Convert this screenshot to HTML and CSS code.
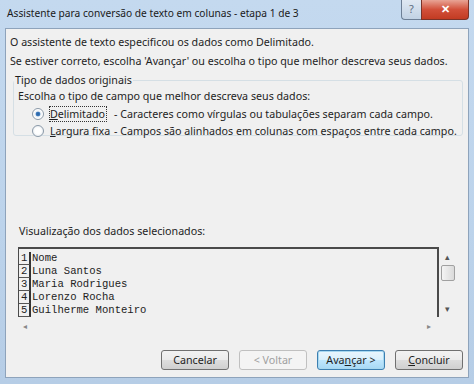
FILE: index.html
```html
<!DOCTYPE html>
<html lang="pt">
<head>
    <meta charset="UTF-8">
    <title>Assistente para conversão de texto em colunas</title>
    <link rel="stylesheet" href="styles.css">
</head>
<body>
    <div class="window">
        <div class="titlebar">
            <span class="title">Assistente para conversão de texto em colunas - etapa 1 de 3</span>
            <div class="caption-buttons">
                <span class="cap-help">?</span>
                <span class="cap-close">✕</span>
            </div>
        </div>
        <div class="client">
            <p class="line">O assistente de texto especificou os dados como Delimitado.</p>
            <p class="line">Se estiver correto, escolha 'Avançar' ou escolha o tipo que melhor descreva seus dados.</p>

            <fieldset class="group">
                <legend>Tipo de dados originais</legend>
                <p class="line">Escolha o tipo de campo que melhor descreva seus dados:</p>
                <div class="option">
                    <span class="radio checked"></span>
                    <span class="opt-name"><span class="focus"><u>D</u>elimitado</span></span>
                    <span class="opt-desc">- Caracteres como vírgulas ou tabulações separam cada campo.</span>
                </div>
                <div class="option">
                    <span class="radio"></span>
                    <span class="opt-name"><u>L</u>argura fixa</span>
                    <span class="opt-desc">- Campos são alinhados em colunas com espaços entre cada campo.</span>
                </div>
            </fieldset>

            <p class="line preview-label">Visualização dos dados selecionados:</p>
            <div class="preview">
                <div class="preview-main">
                    <div class="grid">
                        <div class="row"><span class="num">1</span><span class="cell">Nome</span></div>
                        <div class="row"><span class="num">2</span><span class="cell">Luna Santos</span></div>
                        <div class="row"><span class="num">3</span><span class="cell">Maria Rodrigues</span></div>
                        <div class="row"><span class="num">4</span><span class="cell">Lorenzo Rocha</span></div>
                        <div class="row"><span class="num">5</span><span class="cell">Guilherme Monteiro</span></div>
                        <div class="row"><span class="num"></span><span class="cell"></span></div>
                    </div>
                    <div class="vscroll">
                        <span class="arrow">▴</span>
                        <span class="thumb"></span>
                        <span class="arrow down">▾</span>
                    </div>
                </div>
                <div class="hscroll">
                    <span class="arrow">◂</span>
                    <span class="arrow">▸</span>
                </div>
            </div>

            <div class="buttons">
                <button class="btn">Cancelar</button>
                <button class="btn" disabled>&lt; Voltar</button>
                <button class="btn default">Ava<u>n</u>çar &gt;</button>
                <button class="btn"><u>C</u>oncluir</button>
            </div>
        </div>
    </div>
</body>
</html>
```

FILE: styles.css
```css
body {
    margin: 0;
    width: 474px;
    height: 384px;
    overflow: hidden;
    font-family: "Noto Sans", "Open Sans", sans-serif;
    font-size: 10.7px;
    color: #1e1e1e;
    background: #b9d1ea;
}
.window {
    height: 384px;
    box-sizing: border-box;
    padding: 0 5px 6px 5px;
    background: linear-gradient(to bottom, #c4d9ef 0%, #bcd3eb 60%, #b6cde6 100%);
    display: flex;
    flex-direction: column;
}
.titlebar {
    height: 28px;
    display: flex;
    justify-content: space-between;
    align-items: flex-start;
}
.title {
    margin: 6px 0 0 2px;
    color: #1a1a1a;
    font-size: 10.2px;
}
.caption-buttons {
    display: flex;
}
.cap-help, .cap-close {
    height: 19px;
    line-height: 18px;
    text-align: center;
    font-size: 11px;
    border: 1px solid #6d7f95;
    border-top: none;
}
.cap-help {
    width: 19px;
    color: #5d6d80;
    background: linear-gradient(to bottom, #dfe8f2, #c2d2e4);
    border-radius: 0 0 0 4px;
    border-right: none;
}
.cap-close {
    width: 46px;
    color: #fff;
    font-weight: bold;
    background: linear-gradient(to bottom, #e8a495 0%, #d2503a 50%, #c23b22 100%);
    border-color: #7a3328;
    border-radius: 0 0 4px 0;
}
.client {
    flex: 1;
    background: #f0f0f0;
    border: 1px solid #8ea3bb;
    padding: 4px 0 0 4px;
    display: flex;
    flex-direction: column;
}
.line {
    margin: 0;
    height: 19px;
    line-height: 19px;
    white-space: nowrap;
}
.group {
    margin: 2px 0 0 3px;
    width: 450px;
    height: 63px;
    box-sizing: border-box;
    padding: 1px 0 0 4px;
    border: 1px solid #d5dfe5;
    border-radius: 3px;
}
.group legend {
    padding: 0 1px;
    margin-left: -4px;
    line-height: 14px;
}
.group .line {
    height: 17px;
    line-height: 16px;
}
.option {
    display: flex;
    align-items: center;
    height: 17px;
    white-space: nowrap;
}
.radio {
    width: 12px;
    height: 12px;
    border-radius: 50%;
    border: 1px solid #8a99a8;
    background: radial-gradient(circle, #ffffff 40%, #dde3e9 100%);
    margin: 0 6px 0 14px;
    box-sizing: border-box;
}
.radio.checked {
    background: radial-gradient(circle, #2a5f9a 0%, #3b7ac0 28%, #e6ecf2 38%, #ffffff 62%);
}
.opt-name {
    width: 64px;
    flex: none;
}
.focus {
    outline: 1px dotted #333;
    padding: 0 1px 0 0;
}
.preview-label {
    margin: 87px 0 0 9px;
    height: 17px;
    line-height: 17px;
}
.preview {
    margin: 7px 0 0 8px;
    width: 440px;
}
.preview-main {
    display: flex;
}
.grid {
    width: 421px;
    height: 70px;
    box-sizing: border-box;
    border-top: 2px solid #4a4a4a;
    border-left: 1px solid #4a4a4a;
    border-right: 2px solid #4a4a4a;
    overflow: hidden;
    padding-top: 3px;
    font-family: "Liberation Mono", monospace;
    font-size: 10.6px;
    color: #222;
}
.row {
    display: flex;
    height: 13px;
    line-height: 13px;
}
.num {
    width: 12px;
    padding-left: 2px;
    border-right: 2px solid #333;
    border-bottom: 1px solid #555;
    box-sizing: border-box;
    height: 13px;
    line-height: 12px;
}
.cell {
    padding-left: 1px;
}
.vscroll {
    width: 17px;
    height: 70px;
    box-sizing: border-box;
    padding-top: 3px;
    display: flex;
    flex-direction: column;
    align-items: center;
    color: #555;
    font-size: 9px;
}
.vscroll .arrow {
    height: 12px;
    line-height: 14px;
}
.vscroll .down {
    margin-top: auto;
    margin-bottom: 3px;
}
.thumb {
    width: 12px;
    height: 14px;
    margin-top: 3px;
    border: 1px solid #a0a0a0;
    border-radius: 2px;
    background: linear-gradient(to right, #f4f4f4, #dadada);
}
.hscroll {
    width: 421px;
    height: 15px;
    display: flex;
    justify-content: space-between;
    padding: 2px 8px 0 5px;
    box-sizing: border-box;
    color: #888;
    font-size: 8px;
    line-height: 14px;
}
.buttons {
    display: flex;
    justify-content: flex-end;
    gap: 10px;
    margin: 18px 5px 0 0;
}
.btn {
    width: 68px;
    height: 20px;
    padding: 0;
    font-family: inherit;
    font-size: 10.7px;
    color: #1e1e1e;
    border: 1px solid #707070;
    border-radius: 3px;
    background: linear-gradient(to bottom, #f2f2f2 0%, #ebebeb 48%, #dddddd 52%, #cfcfcf 100%);
}
.btn:disabled {
    color: #a0a0a0;
    border-color: #c0c0c0;
    background: #f4f4f4;
}
.btn.default {
    border-color: #3c7fb1;
    box-shadow: inset 0 0 0 1px #a8d8f0;
    background: linear-gradient(to bottom, #eaf6fd 0%, #d9f0fc 48%, #bee6fd 52%, #a7d9f5 100%);
}
```
